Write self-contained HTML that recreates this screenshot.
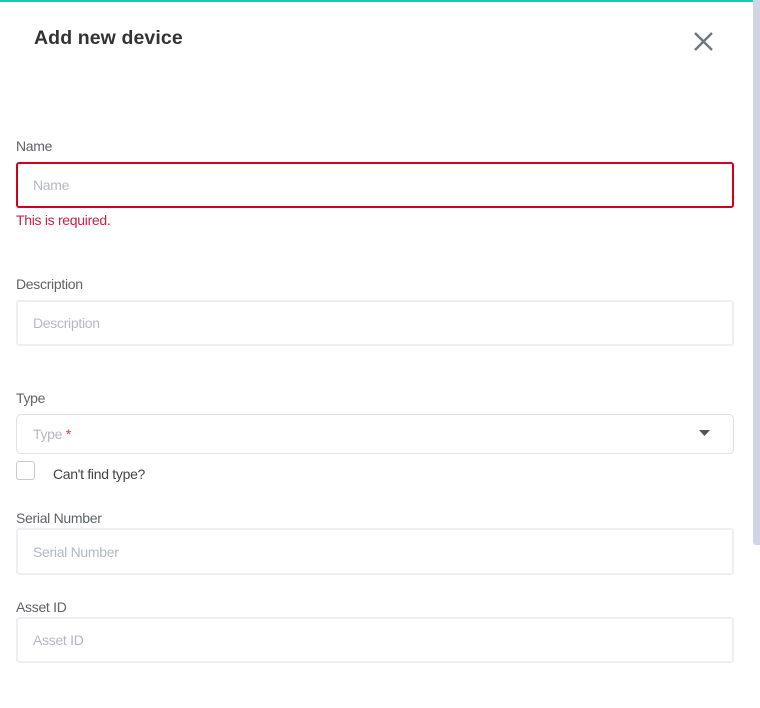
<!DOCTYPE html>
<html><head><style>
*{box-sizing:border-box;margin:0;padding:0}
body{width:760px;height:708px;background:#fff;position:relative;overflow:hidden;font-family:"Liberation Sans",sans-serif}
.a{position:absolute}
.lbl{position:absolute;left:16px;font-size:14px;color:#5f6368;letter-spacing:-0.3px}
.box{position:absolute;left:16px;width:718px;border:2px solid #eeeef4;border-radius:3px;font-size:14px;color:#b3b8c6;padding-left:15px;display:flex;align-items:center;letter-spacing:-0.3px}
</style></head><body>
<div class="a" style="left:0;top:0;width:753px;height:2px;background:#1cc7b4"></div>
<div class="a" style="left:753px;top:0;width:7px;height:545px;background:#cdd5e6;border-radius:0 0 0 3px"></div>
<div class="a" style="left:34px;top:27px;font-size:19.5px;font-weight:bold;color:#333;letter-spacing:0.1px">Add new device</div>
<svg class="a" style="left:693px;top:31px" width="22" height="22" viewBox="0 0 22 22"><path d="M2 2L19 19M19 2L2 19" stroke="#6b7785" stroke-width="2.4"/></svg>
<div class="lbl" style="top:138px">Name</div>
<div class="box" style="top:162px;height:46px;border-color:#d0021b">Name</div>
<div class="a" style="left:16px;top:212px;font-size:14px;color:#c0254a;letter-spacing:-0.3px">This is required.</div>
<div class="lbl" style="top:276px">Description</div>
<div class="box" style="top:300px;height:46px">Description</div>
<div class="lbl" style="top:390px">Type</div>
<div class="box" style="top:414px;height:40px;border-width:1px;border-color:#dfe1ea;border-radius:5px;padding-left:16px">Type&nbsp;<span style="color:#e53935">*</span></div>
<svg class="a" style="left:699px;top:430px" width="11" height="7"><path d="M0 0H11L5.5 6Z" fill="#555"/></svg>
<div class="a" style="left:16px;top:461px;width:19px;height:19px;border:1px solid #c5cad6;border-radius:3px"></div>
<div class="a" style="left:53px;top:466px;font-size:14px;color:#444;letter-spacing:-0.3px">Can't find type?</div>
<div class="lbl" style="top:510px">Serial Number</div>
<div class="box" style="top:528px;height:47px">Serial Number</div>
<div class="lbl" style="top:599px">Asset ID</div>
<div class="box" style="top:617px;height:46px">Asset ID</div>
</body></html>
